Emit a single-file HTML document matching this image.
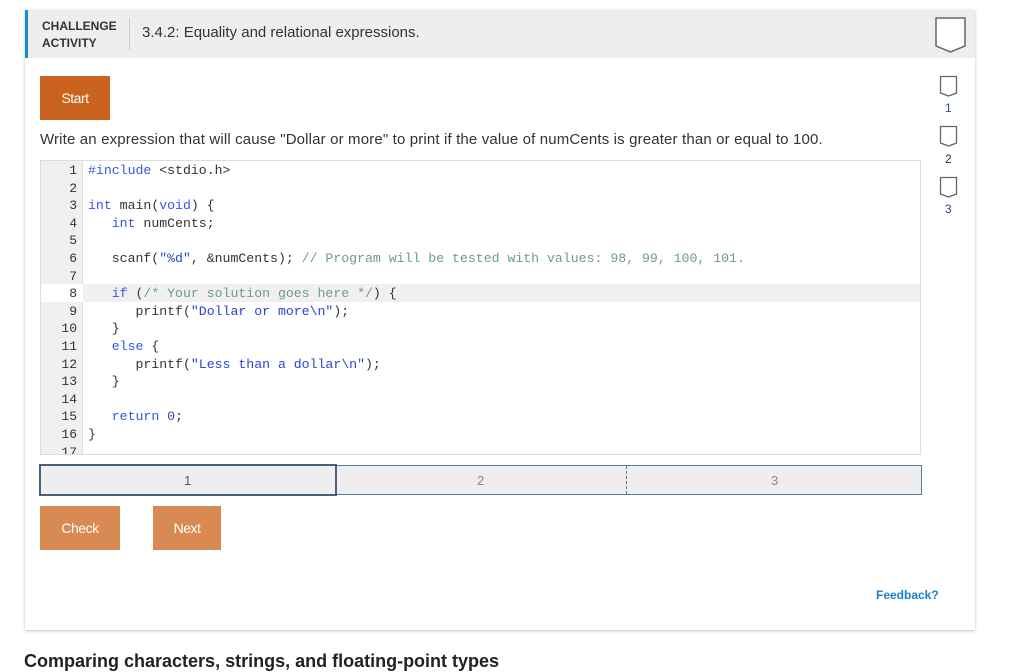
<!DOCTYPE html>
<html><head><meta charset="utf-8"><style>
body{margin:0;width:1024px;height:657px;background:#fff;font-family:"Liberation Sans",sans-serif;position:relative;overflow:hidden}
.card{position:absolute;left:25px;top:10px;width:950px;height:620px;background:#fff;box-shadow:0 1px 3px rgba(0,0,0,.25)}
.hdr{position:absolute;left:0;top:0;width:950px;height:48px;background:#eeeeee;border-left:3px solid #1a8ad3;box-sizing:border-box}
.ca{position:absolute;left:14px;top:8px;font-size:12px;font-weight:bold;color:#333;line-height:17px}
.sep{position:absolute;left:101px;top:8px;width:1px;height:32px;background:#ccc}
.title{position:absolute;left:114px;top:14px;font-size:15px;color:#333}
.btn{position:absolute;color:#fff;font-size:14px;text-align:center;letter-spacing:-0.5px}
.code{position:absolute;left:40px;top:160px;width:881px;height:295px;border:1px solid #ddd;box-sizing:border-box;overflow:hidden;font-family:"Liberation Mono",monospace;font-size:13.2px}
.gut{position:absolute;left:0;top:0;width:41px;height:100%;background:#f0f0f0;border-right:1px solid #ddd}
.ln{position:absolute;left:0;width:36px;text-align:right;color:#333;height:17.6px;line-height:17.6px;font-size:13px}
.cl{position:absolute;left:47px;white-space:pre;color:#333;height:17.6px;line-height:17.6px}
.k{color:#3355ee}.s{color:#2a44cc}.c{color:#6a9e8a}
</style></head><body>
<div class="card">
<div class="hdr"><div class="ca">CHALLENGE<br>ACTIVITY</div><div class="sep"></div><div class="title">3.4.2: Equality and relational expressions.</div></div>
<svg style="position:absolute;left:909px;top:6px" width="34" height="40"><path d="M2 2H31V30L16.5 36L2 30Z" fill="#fff" stroke="#666" stroke-width="1.5"/></svg>
<svg style="position:absolute;left:914px;top:65px" width="20" height="24"><path d="M1.5 1.5H17.5V18L9.5 21L1.5 18Z" fill="#fff" stroke="#666" stroke-width="1.3"/></svg>
<div style="position:absolute;left:920px;top:91px;font-size:12px;color:#2a4aa0">1</div>
<svg style="position:absolute;left:914px;top:115px" width="20" height="24"><path d="M1.5 1.5H17.5V18L9.5 21L1.5 18Z" fill="#fff" stroke="#666" stroke-width="1.3"/></svg>
<div style="position:absolute;left:920px;top:142px;font-size:12px;color:#333">2</div>
<svg style="position:absolute;left:914px;top:166px" width="20" height="24"><path d="M1.5 1.5H17.5V18L9.5 21L1.5 18Z" fill="#fff" stroke="#666" stroke-width="1.3"/></svg>
<div style="position:absolute;left:920px;top:192px;font-size:12px;color:#2a4aa0">3</div>
<div style="position:absolute;left:851px;top:578px;font-size:12px;font-weight:bold;color:#1a7fd0">Feedback?</div>
</div>
<div class="btn" style="left:40px;top:76px;width:70px;height:44px;line-height:44px;background:#c9631f">Start</div>
<div style="position:absolute;left:40px;top:131px;font-size:15px;color:#333;letter-spacing:0.15px">Write an expression that will cause "Dollar or more" to print if the value of numCents is greater than or equal to 100.</div>
<div class="code">
<div class="gut"></div>
<div style="position:absolute;left:0;top:123px;width:42px;height:17.6px;background:#fff"></div>
<div style="position:absolute;left:42px;top:123px;width:840px;height:17.6px;background:#f0f0f0"></div>
<div class="ln" style="top:1px">1</div><div class="ln" style="top:18.6px">2</div><div class="ln" style="top:36.2px">3</div><div class="ln" style="top:53.8px">4</div><div class="ln" style="top:71.4px">5</div><div class="ln" style="top:89px">6</div><div class="ln" style="top:106.6px">7</div><div class="ln" style="top:124.2px">8</div><div class="ln" style="top:141.8px">9</div><div class="ln" style="top:159.4px">10</div><div class="ln" style="top:177px">11</div><div class="ln" style="top:194.6px">12</div><div class="ln" style="top:212.2px">13</div><div class="ln" style="top:229.8px">14</div><div class="ln" style="top:247.4px">15</div><div class="ln" style="top:265px">16</div><div class="ln" style="top:282.6px">17</div>
<div class="cl" style="top:1px"><span class="k">#include</span> &lt;stdio.h&gt;</div>
<div class="cl" style="top:36.2px"><span class="k">int</span> main(<span class="k">void</span>) {</div>
<div class="cl" style="top:53.8px">   <span class="k">int</span> numCents;</div>
<div class="cl" style="top:89px">   scanf(<span class="s">"%d"</span>, &amp;numCents); <span class="c">// Program will be tested with values: 98, 99, 100, 101.</span></div>
<div class="cl" style="top:124.2px">   <span class="k">if</span> (<span class="c">/* Your solution goes here */</span>) {</div>
<div class="cl" style="top:141.8px">      printf(<span class="s">"Dollar or more\n"</span>);</div>
<div class="cl" style="top:159.4px">   }</div>
<div class="cl" style="top:177px">   <span class="k">else</span> {</div>
<div class="cl" style="top:194.6px">      printf(<span class="s">"Less than a dollar\n"</span>);</div>
<div class="cl" style="top:212.2px">   }</div>
<div class="cl" style="top:247.4px">   <span class="k">return</span> <span class="s">0</span>;</div>
<div class="cl" style="top:265px">}</div>
</div>
<div style="position:absolute;left:40px;top:465px;width:882px;height:30px;background:#eee;border:1.5px solid #5a7a99;box-sizing:border-box"></div>
<div style="position:absolute;left:626px;top:466px;width:0;height:28px;border-left:1px dashed #5a7a99"></div>
<div style="position:absolute;left:39px;top:464px;width:298px;height:32px;border:2.5px solid #4a6282;box-sizing:border-box"></div>
<div style="position:absolute;left:184px;top:473px;font-size:13px;color:#555">1</div>
<div style="position:absolute;left:477px;top:473px;font-size:13px;color:#888">2</div>
<div style="position:absolute;left:771px;top:473px;font-size:13px;color:#888">3</div>
<div class="btn" style="left:40px;top:506px;width:80px;height:44px;line-height:44px;background:#d88a52">Check</div>
<div class="btn" style="left:153px;top:506px;width:68px;height:44px;line-height:44px;background:#d88a52">Next</div>
<div style="position:absolute;left:24px;top:651px;font-size:18px;font-weight:bold;color:#222">Comparing characters, strings, and floating-point types</div>
</body></html>
